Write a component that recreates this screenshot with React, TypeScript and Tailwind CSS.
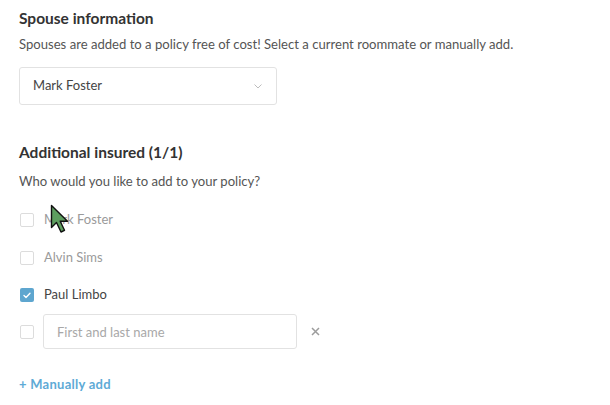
import React, { useState } from 'react';

const people = ['Mark Foster', 'Alvin Sims', 'Paul Limbo'];

function Checkbox({ checked }: { checked: boolean }) {
  if (checked) {
    return (
      <span className="flex h-[14px] w-[14px] items-center justify-center rounded-[2px] bg-[#5ea6cf]">
        <svg width="8" height="7" viewBox="0 0 8 7" fill="none">
          <path d="M1 3.6 3 5.5 7 1.3" stroke="white" strokeWidth="1.4" strokeLinecap="round" strokeLinejoin="round" />
        </svg>
      </span>
    );
  }
  return <span className="block h-[14px] w-[14px] rounded-[2px] border border-[#dcdcdc] bg-white" />;
}

export default function App() {
  const [selected] = useState<string[]>(['Paul Limbo']);

  return (
    <div className="relative min-h-screen bg-white px-[19px] pt-[8px] font-['Lato','Liberation_Sans',sans-serif]">
      {/* Spouse */}
      <h2 className="h-5 text-[15.5px] font-bold leading-5 text-[#333]">Spouse information</h2>
      <p className="mt-[6px] h-5 text-[13.1px] leading-5 text-[#555]">
        Spouses are added to a policy free of cost! Select a current roommate or manually add.
      </p>
      <div className="mt-[13px] flex h-[38px] w-[258px] items-center justify-between rounded-[3px] border border-[#e2e2e2] pl-[13px] pr-[14px]">
        <span className="text-[13px] text-[#444]">Mark Foster</span>
        <svg width="8" height="5" viewBox="0 0 8 5" fill="none">
          <path d="M0.5 0.5 4 4 7.5 0.5" stroke="#bdbdbd" strokeWidth="1" />
        </svg>
      </div>

      {/* Additional insured */}
      <h2 className="mt-[37px] h-5 text-[15.5px] font-bold leading-5 text-[#333]">Additional insured (1/1)</h2>
      <p className="mt-[9px] h-5 text-[13.1px] leading-5 text-[#555]">Who would you like to add to your policy?</p>

      <ul className="mt-[10px]">
        {people.map((name, i) => {
          const on = selected.includes(name);
          return (
            <li
              key={name}
              className={`flex items-center gap-[10px] pl-px ${i === 2 ? 'h-[36px]' : 'h-[38px]'}`}
            >
              <Checkbox checked={on} />
              <span className={`text-[13px] ${on ? 'text-[#444]' : 'text-[#9a9a9a]'}`}>{name}</span>
            </li>
          );
        })}
      </ul>

      <div className="mt-px flex h-[35px] items-center pl-px">
        <Checkbox checked={false} />
        <input
          className="ml-[9px] h-[35px] w-[254px] rounded-[3px] border border-[#e2e2e2] px-[13px] text-[13px] text-[#444] outline-none placeholder:text-[#a8a8a8]"
          placeholder="First and last name"
        />
        <svg className="ml-[14px]" width="9" height="9" viewBox="0 0 9 9" fill="none">
          <path d="M1 1 8 8M8 1 1 8" stroke="#9c9c9c" strokeWidth="1.5" />
        </svg>
      </div>

      <button className="mt-[25px] h-5 text-[13px] font-bold leading-5 tracking-[0.02em] text-[#5eaad6]">+ Manually add</button>

      {/* mouse cursor captured in the screenshot */}
      <svg
        className="pointer-events-none absolute left-[50px] top-[204px]"
        width="20"
        height="30"
        viewBox="0 0 20 30"
      >
        <path
          d="M1.5 1.5 L1.5 23.5 L6.5 18.5 L11 28 L14.5 26.3 L10.2 17.2 L17.5 17.2 Z"
          fill="#5d9e5f"
          stroke="#111"
          strokeWidth="1.4"
          strokeLinejoin="round"
        />
      </svg>
    </div>
  );
}
